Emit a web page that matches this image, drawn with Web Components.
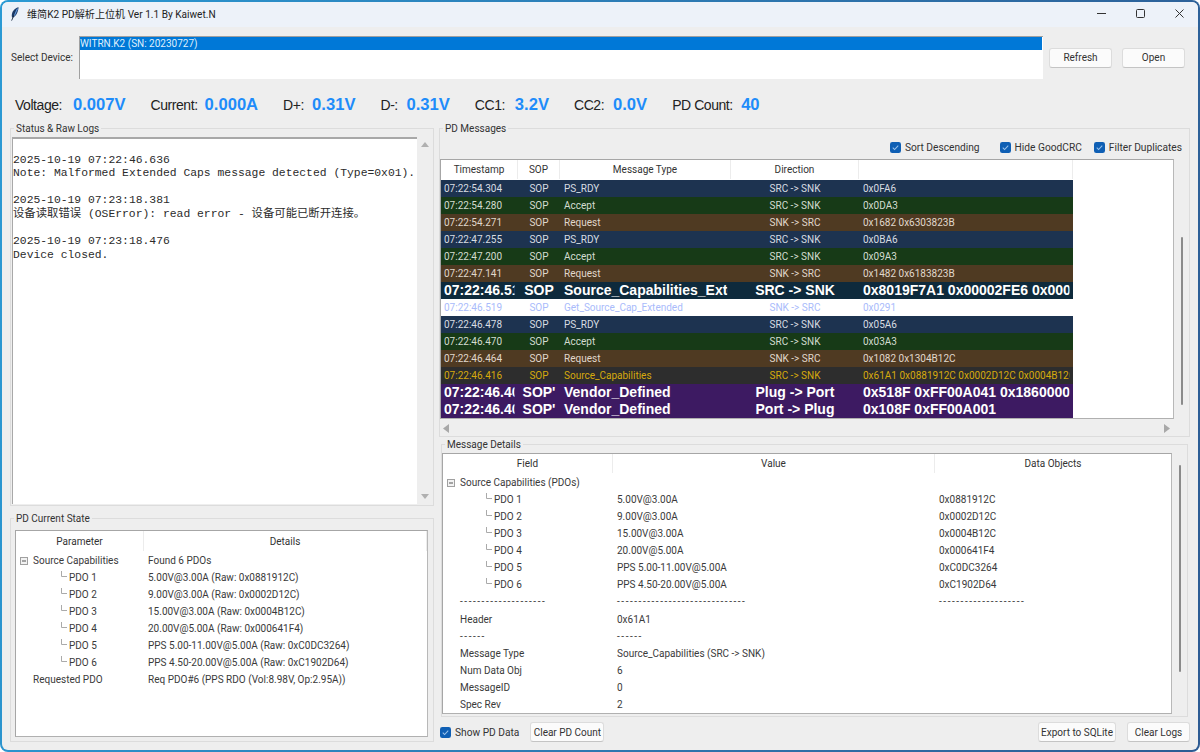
<!DOCTYPE html>
<html>
<head>
<meta charset="utf-8">
<title>PD</title>
<style>
  html, body { margin: 0; padding: 0; background: #fff; }
  body { font-family: Roboto, "Noto Sans CJK SC", sans-serif; font-size: 10px; color: #333; }
</style>
</head>
<body>
<app-window></app-window>
<script>
const UI_FONT = `10px Roboto, "Noto Sans CJK SC", sans-serif`;

class TkButton extends HTMLElement {
  constructor() {
    super();
    this.attachShadow({ mode: "open" });
    this.shadowRoot.innerHTML = `
      <style>
        :host {
          display: inline-flex; align-items: center; justify-content: center;
          box-sizing: border-box; height: 20px;
          background: #fbfbfb; border: 1px solid #dcdcdc; border-bottom-color: #c4c4c4;
          border-radius: 3px; font: ${UI_FONT}; color: #333; white-space: nowrap;
        }
      </style>
      <slot></slot>`;
  }
}
customElements.define("tk-button", TkButton);

class TkCheck extends HTMLElement {
  constructor() {
    super();
    this.attachShadow({ mode: "open" });
    this.shadowRoot.innerHTML = `
      <style>
        :host { display: inline-flex; align-items: center; gap: 4px; font: ${UI_FONT}; font-size: 10.2px; color: #333; white-space: nowrap; }
        svg { width: 11px; height: 11px; flex: none; }
      </style>
      <svg viewBox="0 0 12 12">
        <rect width="12" height="12" rx="2.5" fill="#0f5fb4"/>
        <path d="M3 6.2 5 8.2 9 4" fill="none" stroke="#9cc4ec" stroke-width="1.1"/>
      </svg>
      <slot></slot>`;
  }
}
customElements.define("tk-check", TkCheck);

class GroupBox extends HTMLElement {
  constructor() {
    super();
    this.attachShadow({ mode: "open" });
    this.shadowRoot.innerHTML = `
      <style>
        :host { display: block; box-sizing: border-box; min-height: 0; }
        fieldset {
          box-sizing: border-box; height: 100%; margin: 0;
          border: 1px solid #dcdcdc; padding: var(--pad, 2px 1px 1px 1px);
          display: flex; flex-direction: column; min-width: 0;
        }
        legend { padding: 0 2px; margin-left: var(--legend-x, 3px); font: ${UI_FONT}; line-height: 14px; color: #333; }
        legend span { display: block; transform: translateY(1px); }
      </style>
      <fieldset><legend><span></span></legend><slot></slot></fieldset>`;
  }
  connectedCallback() {
    this.shadowRoot.querySelector("legend span").textContent = this.getAttribute("label");
  }
}
customElements.define("group-box", GroupBox);

class VScroll extends HTMLElement {
  constructor() {
    super();
    this.attachShadow({ mode: "open" });
    this.shadowRoot.innerHTML = `
      <style>
        :host { display: flex; flex-direction: column; align-items: center; box-sizing: border-box; width: 15px; flex: none; }
        .top { flex: var(--before, 1); }
        .bar { flex: var(--thumb, 0); width: 2px; background: #8a8a8a; border-radius: 1px; }
        .bottom { flex: var(--after, 0); }
        svg { width: 8px; height: 5px; flex: none; margin: 5px 0; display: var(--arrows, block); }
      </style>
      <svg viewBox="0 0 8 5"><path d="M4 0 8 5H0z" fill="#b0b0b0"/></svg>
      <div class="top"></div><div class="bar"></div><div class="bottom"></div>
      <svg viewBox="0 0 8 5"><path d="M0 0H8L4 5z" fill="#b0b0b0"/></svg>`;
  }
}
customElements.define("v-scroll", VScroll);

class TitleBar extends HTMLElement {
  constructor() {
    super();
    this.attachShadow({ mode: "open" });
    this.shadowRoot.innerHTML = `
      <style>
        :host {
          display: flex; align-items: center; box-sizing: border-box; height: 25px; flex: none; padding: 0 0 2px 9px;
          background: #edf2f9; font: ${UI_FONT}; font-size: 10.1px; color: #222;
        }
        .feather { width: 8px; height: 14px; flex: none; margin-right: 8px; }
        .name { flex: 1; white-space: nowrap; }
        .ctls { display: flex; margin-right: -1px; }
        .ctl { width: 39px; display: flex; justify-content: center; }
        .ctl svg { width: 9px; height: 9px; }
      </style>
      <svg class="feather" viewBox="0 0 8 14">
        <path d="M7.6 .3C4.6 .8 1.6 3.6 .9 7.2 .6 8.8 .8 10 1.4 10.8 4.4 10 7.2 5.6 7.6 .3Z" fill="#1d3a66"/>
        <path d="M5.2 3.4 .6 13.6" stroke="#1d2f45" stroke-width=".9" fill="none"/>
        <path d="M6.6 1.6C5.4 3.6 4.6 5.6 3.4 8.6" stroke="#5f96dc" stroke-width="1.1" fill="none"/>
      </svg>
      <span class="name">维简K2 PD解析上位机 Ver 1.1 By Kaiwet.N</span>
      <div class="ctls">
        <div class="ctl"><svg viewBox="0 0 9 9"><path d="M0 4.5H9" stroke="#333" fill="none"/></svg></div>
        <div class="ctl"><svg viewBox="0 0 9 9"><rect x=".5" y=".5" width="8" height="8" rx="1" stroke="#333" fill="none"/></svg></div>
        <div class="ctl"><svg viewBox="0 0 9 9"><path d="M.5 .5 8.5 8.5M8.5 .5 .5 8.5" stroke="#333" fill="none"/></svg></div>
      </div>`;
  }
}
customElements.define("title-bar", TitleBar);

class DeviceBar extends HTMLElement {
  constructor() {
    super();
    this.attachShadow({ mode: "open" });
    this.shadowRoot.innerHTML = `
      <style>
        :host { display: flex; align-items: center; flex: none; padding: 9px 13px 0 9px; font: ${UI_FONT}; color: #333; }
        .lbl { width: 68px; flex: none; white-space: nowrap; }
        .list {
          flex: 1; height: 43px; box-sizing: border-box; background: #fff;
          border-top: 1px solid #a0a0a0; border-left: 1px solid #a0a0a0; margin-right: 6px;
        }
        .sel { height: 13px; line-height: 13px; background: #0078d7; color: #dfeffc; margin-right: 1px; }
        tk-button { width: 63px; }
        tk-button + tk-button { margin-left: 10px; }
      </style>
      <span class="lbl">Select Device:</span>
      <div class="list"><div class="sel">WITRN.K2 (SN: 20230727)</div></div>
      <tk-button>Refresh</tk-button>
      <tk-button>Open</tk-button>`;
  }
}
customElements.define("device-bar", DeviceBar);

class StatRow extends HTMLElement {
  constructor() {
    super();
    this.attachShadow({ mode: "open" });
    const items = [
      ["Voltage:", "0.007V", 50], ["Current:", "0.000A", 46], ["D+:", "0.31V", 21], ["D-:", "0.31V", 18],
      ["CC1:", "3.2V", 32], ["CC2:", "0.0V", 31], ["PD Count:", "40", 61]
    ];
    this.shadowRoot.innerHTML = `
      <style>
        :host { display: flex; align-items: center; gap: 25px; height: 24px; flex: none; margin: 14px 0 4px; padding-left: 13px;
          font-family: "Liberation Sans", sans-serif; color: #222; }
        div { display: flex; align-items: baseline; gap: 8px; }
        span { font-size: 14px; letter-spacing: -.45px; white-space: nowrap; }
        b { font-size: 16.6px; color: #1e8cfa; }
      </style>
      ${items.map(i => `<div><span style="width:${i[2]}px">${i[0]}</span><b>${i[1]}</b></div>`).join("")}`;
  }
}
customElements.define("stat-row", StatRow);

class LogView extends HTMLElement {
  constructor() {
    super();
    this.attachShadow({ mode: "open" });
    this.shadowRoot.innerHTML = `
      <style>
        :host { display: flex; flex: 1; min-height: 0; }
        pre {
          flex: 1; margin: 0; padding: 1px 0 0 0; background: #fff; box-sizing: border-box;
          border-top: 2px solid #a8a8a8; border-left: 1px solid #a8a8a8;
          font: 11.36px/13.6px "Liberation Mono", "Noto Sans CJK SC", monospace; color: #2b2b2b; overflow: hidden;
        }
      </style>
      <pre>

2025-10-19 07:22:46.636
Note: Malformed Extended Caps message detected (Type=0x01).

2025-10-19 07:23:18.381
设备读取错误 (OSError): read error - 设备可能已断开连接。

2025-10-19 07:23:18.476
Device closed.</pre>
      <v-scroll></v-scroll>`;
  }
}
customElements.define("log-view", LogView);

// generic tk treeview: columns + rows, first column may be a tree
class DataTable extends HTMLElement {
  constructor() {
    super();
    this.attachShadow({ mode: "open" });
  }

  set config(c) {
    const cols = c.columns.map(x => x.w + "px").join(" ");
    const label = text => /^-+$/.test(text) ? `<span class="dash">${text}</span>` : text;
    const cell = (text, col) => {
      const cls = col.align === "center" ? "cell center" : "cell";
      return `<div class="${cls}" style="padding-left:${col.pad || 0}px">${label(text)}</div>`;
    };
    const rows = c.rows.map(r => {
      if (c.tree) {
        const [kind, ...vals] = r;
        const first = kind === "open"
          ? `<svg class="exp" viewBox="0 0 8 8"><rect x=".5" y=".5" width="7" height="7" fill="#f2f2f2" stroke="#a0a0a0"/><path d="M2 4H6" stroke="#555"/></svg><span class="at" style="left:${c.textX}px">${vals[0]}</span>`
          : kind === "child"
          ? `<svg class="con" style="left:${c.conX}px" viewBox="0 0 6 8"><path d="M.5 0V5.5H6" stroke="#aaa" fill="none"/></svg><span class="at" style="left:${c.childX}px">${vals[0]}</span>`
          : `<span class="at" style="left:${c.textX}px">${label(vals[0])}</span>`;
        const rest = vals.slice(1).map((v, i) => cell(v, c.columns[i + 1])).join("");
        return `<div class="row"><div class="cell first">${first}</div>${rest}</div>`;
      }
      const [style, ...vals] = r;
      return `<div class="row ${style}">${vals.map((v, i) => cell(v, c.columns[i])).join("")}</div>`;
    }).join("");

    this.shadowRoot.innerHTML = `
      <style>
        :host { display: block; flex: 1; min-width: 0; min-height: 0; box-sizing: border-box; overflow: hidden; background: #fff;
          border: 1px solid #a6a6a6; border-bottom-color: #b0b0b0; border-right-color: #b8b8b8;
          font: ${UI_FONT}; color: #3a3a3a; }
        .head { display: grid; grid-template-columns: ${cols} 1fr; box-sizing: border-box; height: ${c.headH || 20}px; padding-bottom: 1px; }
        .head div { display: flex; align-items: center; justify-content: center; border-right: 1px solid #ececec; color: #333; white-space: nowrap; }
        .head div:last-child { border-right: 0; }
        .row { display: grid; grid-template-columns: ${cols}; height: ${c.rowH || 17.07}px; line-height: 17px; width: max-content; }
        .cell { overflow: hidden; white-space: nowrap; box-sizing: border-box; position: relative; }
        .center { text-align: center; }
        .first { position: relative; }
        .at { position: absolute; }
        .dash { letter-spacing: 1.55px; }
        .exp { position: absolute; left: ${c.expX || 0}px; top: 5px; width: 8px; height: 8px; }
        .con { position: absolute; top: 2px; width: 6px; height: 8px; }
        .blue { background: #1d3350; color: #d8dde2; }
        .green { background: #173a17; color: #d3dcd0; }
        .brown { background: #4f3a22; color: #e0d8cc; }
        .ext { background: #0e2a3c; color: #fff; }
        .ext, .vdm { font: bold 14px/17px "Liberation Sans", sans-serif; }
        .ext .cell:not(.center), .vdm .cell:not(.center), .caps .cell:not(.center) { clip-path: inset(0 3.5px 0 0); }
        .ghost { background: #fff; color: #a9bbfb; }
        .caps { background: #2d2d2d; color: #d6a90c; }
        .vdm { background: #3d1a62; color: #fff; }
      </style>
      <div class="head">${c.columns.map(x => `<div>${x.title}</div>`).join("")}<div></div></div>
      ${rows}`;
  }
}
customElements.define("data-table", DataTable);

class PdMessages extends HTMLElement {
  constructor() {
    super();
    this.attachShadow({ mode: "open" });
    this.shadowRoot.innerHTML = `
      <style>
        :host { display: block; height: 316px; flex: none; }
        group-box { height: 100%; --pad: 0 0 0 0; }
        .opts { display: flex; justify-content: flex-end; align-items: center; height: 24px; padding-right: 7px; }
        .opts tk-check:nth-child(1) { margin-right: 20px; }
        .opts tk-check:nth-child(2) { margin-right: 12px; }
        .body { display: flex; height: 260px; }
        v-scroll { --before: 78; --thumb: 168; --after: 0; --arrows: none; height: 246px; }
        .hs { display: flex; justify-content: space-between; padding: 5px 19px 0 3px; }
        .hs svg { width: 6px; height: 9px; }
      </style>
      <group-box label="PD Messages">
        <div class="opts">
          <tk-check>Sort Descending</tk-check>
          <tk-check>Hide GoodCRC</tk-check>
          <tk-check>Filter Duplicates</tk-check>
        </div>
        <div class="body">
          <data-table></data-table>
          <v-scroll></v-scroll>
        </div>
        <div class="hs">
          <svg viewBox="0 0 6 9"><path d="M6 0V9L0 4.5z" fill="#a8a8a8"/></svg>
          <svg viewBox="0 0 6 9"><path d="M0 0 6 4.5 0 9z" fill="#a8a8a8"/></svg>
        </div>
      </group-box>`;
    this.shadowRoot.querySelector("data-table").config = {
      rowH: 17,
      columns: [
        { title: "Timestamp", w: 77, pad: 3 },
        { title: "SOP", w: 42, align: "center" },
        { title: "Message Type", w: 171, pad: 4 },
        { title: "Direction", w: 128, align: "center" },
        { title: "", w: 214, pad: 4 }
      ],
      rows: [
        ["blue", "07:22:54.304", "SOP", "PS_RDY", "SRC -> SNK", "0x0FA6"],
        ["green", "07:22:54.280", "SOP", "Accept", "SRC -> SNK", "0x0DA3"],
        ["brown", "07:22:54.271", "SOP", "Request", "SNK -> SRC", "0x1682 0x6303823B"],
        ["blue", "07:22:47.255", "SOP", "PS_RDY", "SRC -> SNK", "0x0BA6"],
        ["green", "07:22:47.200", "SOP", "Accept", "SRC -> SNK", "0x09A3"],
        ["brown", "07:22:47.141", "SOP", "Request", "SNK -> SRC", "0x1482 0x6183823B"],
        ["ext", "07:22:46.519", "SOP", "Source_Capabilities_Extended", "SRC -> SNK", "0x8019F7A1 0x00002FE6 0x00000000"],
        ["ghost", "07:22:46.519", "SOP", "Get_Source_Cap_Extended", "SNK -> SRC", "0x0291"],
        ["blue", "07:22:46.478", "SOP", "PS_RDY", "SRC -> SNK", "0x05A6"],
        ["green", "07:22:46.470", "SOP", "Accept", "SRC -> SNK", "0x03A3"],
        ["brown", "07:22:46.464", "SOP", "Request", "SNK -> SRC", "0x1082 0x1304B12C"],
        ["caps", "07:22:46.416", "SOP", "Source_Capabilities", "SRC -> SNK", "0x61A1 0x0881912C 0x0002D12C 0x0004B12C 0x000641F4"],
        ["vdm", "07:22:46.401", "SOP'", "Vendor_Defined", "Plug -> Port", "0x518F 0xFF00A041 0x18600000"],
        ["vdm", "07:22:46.400", "SOP'", "Vendor_Defined", "Port -> Plug", "0x108F 0xFF00A001"]
      ]
    };
  }
}
customElements.define("pd-messages", PdMessages);

class MessageDetails extends HTMLElement {
  constructor() {
    super();
    this.attachShadow({ mode: "open" });
    this.shadowRoot.innerHTML = `
      <style>
        :host { display: block; flex: 1; min-height: 0; margin: 0 2px 0 2px; }
        group-box { height: 100%; --pad: 2px 0 2px 0; }
        .body { display: flex; flex: 1; min-height: 0; }
        v-scroll { --before: 12; --thumb: 206; --after: 42; --arrows: none; }
      </style>
      <group-box label="Message Details">
        <div class="body"><data-table></data-table><v-scroll></v-scroll></div>
      </group-box>`;
    this.shadowRoot.querySelector("data-table").config = {
      tree: true, expX: 4, textX: 17, conX: 43, childX: 51,
      columns: [
        { title: "Field", w: 170 },
        { title: "Value", w: 322, pad: 4 },
        { title: "Data Objects", w: 237, pad: 4 }
      ],
      rows: [
        ["open", "Source Capabilities (PDOs)", "", ""],
        ["child", "PDO 1", "5.00V@3.00A", "0x0881912C"],
        ["child", "PDO 2", "9.00V@3.00A", "0x0002D12C"],
        ["child", "PDO 3", "15.00V@3.00A", "0x0004B12C"],
        ["child", "PDO 4", "20.00V@5.00A", "0x000641F4"],
        ["child", "PDO 5", "PPS 5.00-11.00V@5.00A", "0xC0DC3264"],
        ["child", "PDO 6", "PPS 4.50-20.00V@5.00A", "0xC1902D64"],
        ["plain", "--------------------", "------------------------------", "--------------------"],
        ["plain", "Header", "0x61A1", ""],
        ["plain", "------", "------", ""],
        ["plain", "Message Type", "Source_Capabilities (SRC -> SNK)", ""],
        ["plain", "Num Data Obj", "6", ""],
        ["plain", "MessageID", "0", ""],
        ["plain", "Spec Rev", "2", ""]
      ]
    };
  }
}
customElements.define("message-details", MessageDetails);

class CurrentState extends HTMLElement {
  constructor() {
    super();
    this.attachShadow({ mode: "open" });
    this.shadowRoot.innerHTML = `
      <style>
        :host { display: block; height: 231px; flex: none; margin-top: 5px; }
        group-box { height: 100%; --pad: 5px 5px 4px 4px; --legend-x: -1px; }
      </style>
      <group-box label="PD Current State"><data-table></data-table></group-box>`;
    this.shadowRoot.querySelector("data-table").config = {
      tree: true, headH: 21, expX: 4, textX: 17, conX: 45, childX: 53,
      columns: [
        { title: "Parameter", w: 128 },
        { title: "Details", w: 283, pad: 4 }
      ],
      rows: [
        ["open", "Source Capabilities", "Found 6 PDOs"],
        ["child", "PDO 1", "5.00V@3.00A (Raw: 0x0881912C)"],
        ["child", "PDO 2", "9.00V@3.00A (Raw: 0x0002D12C)"],
        ["child", "PDO 3", "15.00V@3.00A (Raw: 0x0004B12C)"],
        ["child", "PDO 4", "20.00V@5.00A (Raw: 0x000641F4)"],
        ["child", "PDO 5", "PPS 5.00-11.00V@5.00A (Raw: 0xC0DC3264)"],
        ["child", "PDO 6", "PPS 4.50-20.00V@5.00A (Raw: 0xC1902D64)"],
        ["plain", "Requested PDO", "Req PDO#6 (PPS RDO (Vol:8.98V, Op:2.95A))"]
      ]
    };
  }
}
customElements.define("current-state", CurrentState);

class AppWindow extends HTMLElement {
  constructor() {
    super();
    this.attachShadow({ mode: "open" });
    this.shadowRoot.innerHTML = `
      <style>
        :host {
          display: block; box-sizing: border-box; width: 1200px; height: 752px; padding: 2px;
          background: linear-gradient(100deg, #2b9ad4, #2d5b93); border-radius: 8px;
          font: ${UI_FONT}; color: #333;
        }
        .win { display: flex; flex-direction: column; height: 100%; overflow: hidden; background: #eeeeee; border-radius: 6px; }
        .main { flex: 1; min-height: 0; display: grid; grid-template-columns: 424px 751px; column-gap: 5px; padding-left: 8px; }
        .left, .right { display: flex; flex-direction: column; min-height: 0; padding-bottom: 8px; }
        .left > group-box { flex: 1; min-height: 0; --legend-x: 2px; }
        .foot { display: flex; align-items: center; flex: none; height: 20px; margin-top: 5px; padding-left: 1px; }
        .foot tk-check { margin-right: 11px; }
        .foot .a { width: 74px; }
        .foot .b { width: 78px; margin-left: auto; }
        .foot .c { width: 63px; margin-left: 11px; }
      </style>
      <div class="win">
        <title-bar></title-bar>
        <device-bar></device-bar>
        <stat-row></stat-row>
        <div class="main">
          <div class="left">
            <group-box label="Status &amp; Raw Logs"><log-view></log-view></group-box>
            <current-state></current-state>
          </div>
          <div class="right">
            <pd-messages></pd-messages>
            <message-details></message-details>
            <div class="foot">
              <tk-check>Show PD Data</tk-check>
              <tk-button class="a">Clear PD Count</tk-button>
              <tk-button class="b">Export to SQLite</tk-button>
              <tk-button class="c">Clear Logs</tk-button>
            </div>
          </div>
        </div>
      </div>`;
  }
}
customElements.define("app-window", AppWindow);
</script>
</body>
</html>
